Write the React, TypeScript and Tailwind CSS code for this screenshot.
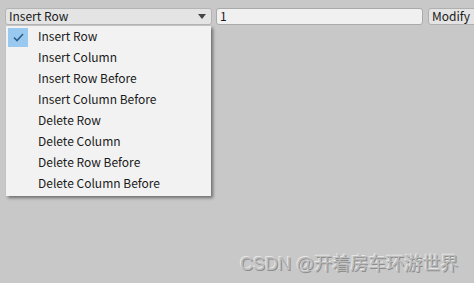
import React from 'react';

const ITEMS = [
  'Insert Row',
  'Insert Column',
  'Insert Row Before',
  'Insert Column Before',
  'Delete Row',
  'Delete Column',
  'Delete Row Before',
  'Delete Column Before',
];

const App: React.FC = () => {
  return (
    <div className="w-[474px] h-[283px] bg-[#c8c8c8] relative overflow-hidden font-['Noto_Sans_CJK_SC','Noto_Sans',sans-serif] text-[12px] text-[#1a1a1a]">
      {/* toolbar */}
      <div className="flex items-center gap-[4px] pl-[5px] pt-[8px] h-[25px]">
        <div className="shrink-0 w-[207px] h-[17px] bg-[#e4e4e4] border border-[#b4b4b4] rounded-[3px] flex items-center justify-between pl-[3px] pr-[4px] pb-[1px]">
          <span className="leading-none">Insert Row</span>
          <svg width="8" height="5" viewBox="0 0 8 5" className="mr-[1px]">
            <path d="M0 0 L8 0 L4 5 Z" fill="#444" />
          </svg>
        </div>
        <div className="shrink-0 w-[207px] h-[17px] bg-[#f0f0f0] border border-[#aaaaaa] rounded-[3px] flex items-center pl-[3px] pb-[1px]">
          <span className="leading-none">1</span>
        </div>
        <div className="shrink-0 ml-[1px] w-[52px] h-[17px] bg-[#e4e4e4] border border-[#b0b0b0] rounded-[3px] flex items-center pl-[3px] pb-[1px]">
          <span className="leading-none">Modify</span>
        </div>
      </div>

      {/* dropdown menu */}
      <div className="absolute left-[6px] top-[26px] w-[205px] bg-[#f2f2f2] py-[1px] shadow-[2px_2px_3px_rgba(0,0,0,0.45)]">
        {ITEMS.map((item, i) => (
          <div key={item} className="h-[21px] flex items-center">
            <div className="w-[32px] h-[21px] flex items-center pl-[2px]">
              {i === 0 && (
                <div className="w-[20px] h-[19px] bg-[#99c9ef] flex items-center justify-center">
                  <svg width="11" height="9" viewBox="0 0 11 9">
                    <path d="M1 4.5 L4 7.5 L10 1" stroke="#2b5d8c" strokeWidth="1.6" fill="none" />
                  </svg>
                </div>
              )}
            </div>
            <span className="leading-none pb-[3px]">{item}</span>
          </div>
        ))}
      </div>

      {/* watermark */}
      <div className="absolute left-[240px] top-[255px] text-[18px] leading-none text-[#bdbdbd] font-['Liberation_Sans','Noto_Sans_CJK_SC',sans-serif] [text-shadow:1px_1px_0_#8e8e8e,-1px_-1px_0_#e6e6e6]">
        CSDN @开着房车环游世界
      </div>
    </div>
  );
};

export default App;
